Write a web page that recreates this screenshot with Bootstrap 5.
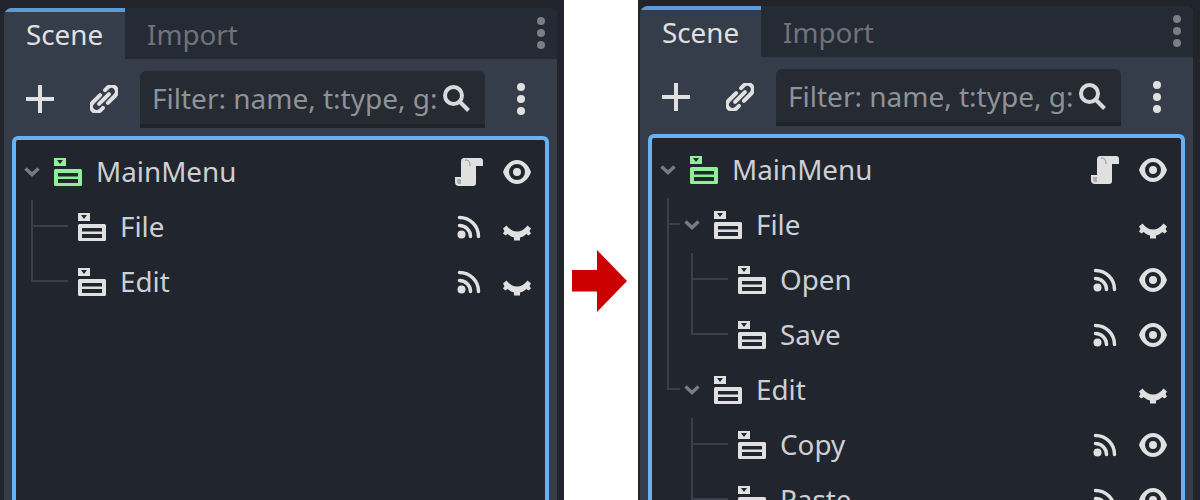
<!DOCTYPE html>
<html lang="en">
<head>
  <meta charset="UTF-8" />
  <title>Godot scene tree</title>
  <link href="https://cdn.jsdelivr.net/npm/bootstrap@5.3.0/dist/css/bootstrap.min.css" rel="stylesheet" />
  <style>
    body {
      margin: 0;
      background: #fff;
      font-family: "Noto Sans", sans-serif;
      font-size: 27.8px;
      overflow: hidden;
    }
    svg { display: block; flex: none; }
    .stage { width: 1200px; height: 500px; overflow: hidden; }

    /* dock panels */
    .dock-outer {
      width: 564px;
      height: 500px;
      background: #21252b;
      padding: 8px 7px 0 4px;
      flex: none;
    }
    .dock-outer.right-dock { width: 562px; padding: 6px 7px 0 2px; }
    .dock-inner {
      height: 100%;
      background: #363d4a;
      border-radius: 8px 8px 0 0;
      overflow: hidden;
    }
    .tabbar { height: 51px; background: #252b34; flex: none; }
    .tab-on {
      width: 121px;
      background: #363d4a;
      border-top: 4px solid #5a9bd8;
      color: #e0e0e0;
      padding-left: 22px;
      line-height: 44px;
    }
    .tab-off { color: #6f7379; padding-left: 22px; line-height: 52px; }
    .tab-menu { margin: 9px 4px 0 auto; width: 24px; }

    /* toolbar */
    .tools { height: 57px; margin: 12px 0 8px; padding-left: 22px; flex: none; }
    .tool-plus { margin-top: 14px; }
    .tool-link { margin: 14px 0 0 36px; }
    .tool-dots { margin: 12px 0 0 32px; }
    .filter-box {
      width: 345px;
      margin-left: 22px;
      background: #252a33;
      border-bottom: 4px solid #1f232a;
      border-radius: 6px 6px 0 0;
      color: #8f9296;
      font-size: 28px;
      padding-left: 12px;
      line-height: 55px;
      white-space: nowrap;
      overflow: hidden;
    }
    .filter-text { width: 291px; overflow: hidden; flex: none; }
    .filter-search { margin-top: 14px; }

    /* tree */
    .tree-box {
      margin: 0 8px;
      flex: 1;
      background: #21252e;
      border: 4px solid #66b2f7;
      border-bottom: 0;
      border-radius: 6px 6px 0 0;
      padding-top: 4px;
    }
    .tree-row { height: 55px; color: #cdcfd2; padding-left: 15px; }
    .tree-row.root-row { padding-left: 8px; }
    .node-label { margin-left: 14px; line-height: 55px; }
    .row-icons { margin-left: auto; padding-right: 14px; gap: 20px; }
    .icon-slot { width: 28px; display: flex; justify-content: center; }
    .fold { margin-left: 4px; margin-right: 14px; }
    .root-fold { margin-right: 14px; }

    /* connector cells, drawn with gradients so they stay in the flow */
    .g-short { width: 13px; }
    .g-long { width: 37px; margin-right: 10px; }
    .g-skip { width: 24px; }
    .g-tee, .g-end, .g-pass { align-self: stretch; flex: none; background-repeat: no-repeat; }
    .g-tee {
      background-image: linear-gradient(#3a404b, #3a404b), linear-gradient(#3a404b, #3a404b);
      background-size: 2px 100%, 100% 2px;
      background-position: 0 1px, 0 26px;
    }
    .g-end {
      background-image: linear-gradient(#3a404b, #3a404b), linear-gradient(#3a404b, #3a404b);
      background-size: 2px 28px, 100% 2px;
      background-position: 0 0, 0 26px;
    }
    .g-pass {
      background-image: linear-gradient(#3a404b, #3a404b);
      background-size: 2px 100%;
      background-position: 0 0;
    }
    .arrow-gap { width: 74px; flex: none; padding: 250px 0 0 8px; }
  </style>
</head>
<body>
  <svg width="0" height="0" class="position-absolute">
    <defs>
      <symbol id="ic-node" viewBox="0 0 28 28">
        <path fill-rule="evenodd" d="M0 0h12v8H0zM3 2l3 4 3-4z"/>
        <path fill-rule="evenodd" d="M1.500 11h25a1.500 1.500 0 0 1 1.500 1.500v14a1.500 1.500 0 0 1-1.500 1.500h-25A1.500 1.500 0 0 1 0 26.500v-14A1.500 1.500 0 0 1 1.500 11zM4 15v3.500h20V15zM4 21v4h20v-4z"/>
      </symbol>
      <symbol id="ic-eye" viewBox="0 0 28 28">
        <path fill-rule="evenodd" d="M14 2C7 2 2 8 0 14c2 6 7 12 14 12s12-6 14-12C26 8 21 2 14 2zm0 4a8 8 0 1 1 0 16 8 8 0 0 1 0-16zm0 4a4 4 0 1 0 0 8 4 4 0 0 0 0-8z"/>
      </symbol>
      <symbol id="ic-closed" viewBox="0 0 28 28">
        <path transform="translate(0 12.500)" d="M0 3l3.500-3Q8 6 14 6T24.500 0L28 3l-1.500 2.500L28 8l-2.500 2-2-1.500-3.500 2.500-3 1v3h-6v-3l-3-1-3.500-2.500-2 1.500L0 8l1.500-2.500z"/>
      </symbol>
      <symbol id="ic-signal" viewBox="0 0 24 24">
        <circle cx="4.500" cy="19.500" r="4"/>
        <path fill="none" stroke="currentColor" stroke-width="3.500" stroke-linecap="round" d="M2.500 10.500a11 11 0 0 1 11 11"/>
        <path fill="none" stroke="currentColor" stroke-width="3.500" stroke-linecap="round" d="M2.500 2.500a19 19 0 0 1 19 19"/>
      </symbol>
      <symbol id="ic-script" viewBox="0 0 28 28">
        <path d="M8.500 0H25a3 3 0 0 1 3 3v5h-7v17a3 3 0 0 1-3 3H4a4 4 0 0 1-4-4v-5h6V3a3 3 0 0 1 2.500-3z"/>
        <path fill="none" stroke="#8a8d92" stroke-width="1" d="M10 2c4 0 5 2 5 6"/>
        <path fill="#a9abaf" d="M2 21h4v5H4a2 2 0 0 1-2-2z"/>
      </symbol>
      <symbol id="ic-dots" viewBox="0 0 8 32">
        <circle cx="4" cy="4" r="4"/><circle cx="4" cy="16" r="4"/><circle cx="4" cy="28" r="4"/>
      </symbol>
      <symbol id="ic-plus" viewBox="0 0 28 28">
        <path d="M12 0h4v12h12v4H16v12h-4V16H0v-4h12z"/>
      </symbol>
      <symbol id="ic-link" viewBox="0 0 28 28">
        <g transform="rotate(-45 14 14)" fill="none" stroke="#e0e0e0" stroke-linecap="round" stroke-width="4">
          <path d="M14 8.500H3.500a5.500 5.500 0 0 0 0 11H7"/>
          <path d="M14 19.500h10.500a5.500 5.500 0 0 0 0-11H21"/>
          <path d="M7 14h14"/>
        </g>
      </symbol>
      <symbol id="ic-search" viewBox="0 0 27 27">
        <circle cx="10.500" cy="10.500" r="8.500" fill="none" stroke="currentColor" stroke-width="4"/>
        <path d="M16.500 16.500l9 9" fill="none" stroke="currentColor" stroke-width="4"/>
      </symbol>
      <symbol id="ic-fold" viewBox="0 0 16 10">
        <path d="M1.500 1.500L8 7.500l6.500-6" fill="none" stroke="#777b82" stroke-width="3.500"/>
      </symbol>
    </defs>
  </svg>

  <div class="stage d-flex">
    <!-- before -->
    <div class="dock-outer">
      <div class="dock-inner d-flex flex-column">
        <div class="tabbar d-flex">
          <div class="tab-on">Scene</div>
          <div class="tab-off">Import</div>
          <div class="tab-menu d-flex justify-content-center"><svg width="8" height="32" fill="#7b7e83"><use href="#ic-dots"/></svg></div>
        </div>
        <div class="tools d-flex align-items-start">
          <svg class="tool-plus" width="28" height="28" fill="#e0e0e0"><use href="#ic-plus"/></svg>
          <svg class="tool-link" width="28" height="28"><use href="#ic-link"/></svg>
          <div class="filter-box d-flex h-100">
            <span class="filter-text">Filter: name, t:type, g:</span>
            <svg class="filter-search" width="27" height="27" color="#d8d9db"><use href="#ic-search"/></svg>
          </div>
          <svg class="tool-dots" width="8" height="32" fill="#e0e0e0"><use href="#ic-dots"/></svg>
        </div>
        <div class="tree-box">
          <div class="tree-row root-row d-flex align-items-center">
            <svg class="root-fold" width="16" height="10"><use href="#ic-fold"/></svg>
            <svg width="28" height="28" fill="#8eef97"><use href="#ic-node"/></svg>
            <span class="node-label">MainMenu</span>
            <div class="row-icons d-flex">
              <div class="icon-slot"><svg width="28" height="28" fill="#e0e0e0"><use href="#ic-script"/></svg></div>
              <div class="icon-slot"><svg width="28" height="28" fill="#e0e0e0"><use href="#ic-eye"/></svg></div>
            </div>
          </div>
          <div class="tree-row d-flex align-items-center">
            <div class="g-tee g-long"></div>
            <svg width="28" height="28" fill="#e0e0e0"><use href="#ic-node"/></svg>
            <span class="node-label">File</span>
            <div class="row-icons d-flex align-items-center">
              <div class="icon-slot"><svg width="24" height="24" color="#e0e0e0" fill="#e0e0e0"><use href="#ic-signal"/></svg></div>
              <div class="icon-slot"><svg width="28" height="28" fill="#e0e0e0"><use href="#ic-closed"/></svg></div>
            </div>
          </div>
          <div class="tree-row d-flex align-items-center">
            <div class="g-end g-long"></div>
            <svg width="28" height="28" fill="#e0e0e0"><use href="#ic-node"/></svg>
            <span class="node-label">Edit</span>
            <div class="row-icons d-flex align-items-center">
              <div class="icon-slot"><svg width="24" height="24" color="#e0e0e0" fill="#e0e0e0"><use href="#ic-signal"/></svg></div>
              <div class="icon-slot"><svg width="28" height="28" fill="#e0e0e0"><use href="#ic-closed"/></svg></div>
            </div>
          </div>
        </div>
      </div>
    </div>

    <div class="arrow-gap">
      <svg width="56" height="62" viewBox="0 0 56 62" fill="#cc0000"><path d="M0 20h25V0l30 31-30 31V41.500H0z"/></svg>
    </div>

    <!-- after -->
    <div class="dock-outer right-dock">
      <div class="dock-inner d-flex flex-column">
        <div class="tabbar d-flex">
          <div class="tab-on">Scene</div>
          <div class="tab-off">Import</div>
          <div class="tab-menu d-flex justify-content-center"><svg width="8" height="32" fill="#7b7e83"><use href="#ic-dots"/></svg></div>
        </div>
        <div class="tools d-flex align-items-start">
          <svg class="tool-plus" width="28" height="28" fill="#e0e0e0"><use href="#ic-plus"/></svg>
          <svg class="tool-link" width="28" height="28"><use href="#ic-link"/></svg>
          <div class="filter-box d-flex h-100">
            <span class="filter-text">Filter: name, t:type, g:</span>
            <svg class="filter-search" width="27" height="27" color="#d8d9db"><use href="#ic-search"/></svg>
          </div>
          <svg class="tool-dots" width="8" height="32" fill="#e0e0e0"><use href="#ic-dots"/></svg>
        </div>
        <div class="tree-box">
          <div class="tree-row root-row d-flex align-items-center">
            <svg class="root-fold" width="16" height="10"><use href="#ic-fold"/></svg>
            <svg width="28" height="28" fill="#8eef97"><use href="#ic-node"/></svg>
            <span class="node-label">MainMenu</span>
            <div class="row-icons d-flex">
              <div class="icon-slot"><svg width="28" height="28" fill="#e0e0e0"><use href="#ic-script"/></svg></div>
              <div class="icon-slot"><svg width="28" height="28" fill="#e0e0e0"><use href="#ic-eye"/></svg></div>
            </div>
          </div>
          <div class="tree-row d-flex align-items-center">
            <div class="g-tee g-short"></div>
            <svg class="fold" width="16" height="10"><use href="#ic-fold"/></svg>
            <svg width="28" height="28" fill="#e0e0e0"><use href="#ic-node"/></svg>
            <span class="node-label">File</span>
            <div class="row-icons d-flex align-items-center">
              <div class="icon-slot"><svg width="28" height="28" fill="#e0e0e0"><use href="#ic-closed"/></svg></div>
            </div>
          </div>
          <div class="tree-row d-flex align-items-center">
            <div class="g-pass g-skip"></div>
            <div class="g-tee g-long"></div>
            <svg width="28" height="28" fill="#e0e0e0"><use href="#ic-node"/></svg>
            <span class="node-label">Open</span>
            <div class="row-icons d-flex align-items-center">
              <div class="icon-slot"><svg width="24" height="24" color="#e0e0e0" fill="#e0e0e0"><use href="#ic-signal"/></svg></div>
              <div class="icon-slot"><svg width="28" height="28" fill="#e0e0e0"><use href="#ic-eye"/></svg></div>
            </div>
          </div>
          <div class="tree-row d-flex align-items-center">
            <div class="g-pass g-skip"></div>
            <div class="g-end g-long"></div>
            <svg width="28" height="28" fill="#e0e0e0"><use href="#ic-node"/></svg>
            <span class="node-label">Save</span>
            <div class="row-icons d-flex align-items-center">
              <div class="icon-slot"><svg width="24" height="24" color="#e0e0e0" fill="#e0e0e0"><use href="#ic-signal"/></svg></div>
              <div class="icon-slot"><svg width="28" height="28" fill="#e0e0e0"><use href="#ic-eye"/></svg></div>
            </div>
          </div>
          <div class="tree-row d-flex align-items-center">
            <div class="g-end g-short"></div>
            <svg class="fold" width="16" height="10"><use href="#ic-fold"/></svg>
            <svg width="28" height="28" fill="#e0e0e0"><use href="#ic-node"/></svg>
            <span class="node-label">Edit</span>
            <div class="row-icons d-flex align-items-center">
              <div class="icon-slot"><svg width="28" height="28" fill="#e0e0e0"><use href="#ic-closed"/></svg></div>
            </div>
          </div>
          <div class="tree-row d-flex align-items-center">
            <div class="g-skip"></div>
            <div class="g-tee g-long"></div>
            <svg width="28" height="28" fill="#e0e0e0"><use href="#ic-node"/></svg>
            <span class="node-label">Copy</span>
            <div class="row-icons d-flex align-items-center">
              <div class="icon-slot"><svg width="24" height="24" color="#e0e0e0" fill="#e0e0e0"><use href="#ic-signal"/></svg></div>
              <div class="icon-slot"><svg width="28" height="28" fill="#e0e0e0"><use href="#ic-eye"/></svg></div>
            </div>
          </div>
          <div class="tree-row d-flex align-items-center">
            <div class="g-skip"></div>
            <div class="g-end g-long"></div>
            <svg width="28" height="28" fill="#e0e0e0"><use href="#ic-node"/></svg>
            <span class="node-label">Paste</span>
            <div class="row-icons d-flex align-items-center">
              <div class="icon-slot"><svg width="24" height="24" color="#e0e0e0" fill="#e0e0e0"><use href="#ic-signal"/></svg></div>
              <div class="icon-slot"><svg width="28" height="28" fill="#e0e0e0"><use href="#ic-eye"/></svg></div>
            </div>
          </div>
        </div>
      </div>
    </div>
  </div>
  <script src="https://cdn.jsdelivr.net/npm/bootstrap@5.3.0/dist/js/bootstrap.bundle.min.js"></script>
</body>
</html>
